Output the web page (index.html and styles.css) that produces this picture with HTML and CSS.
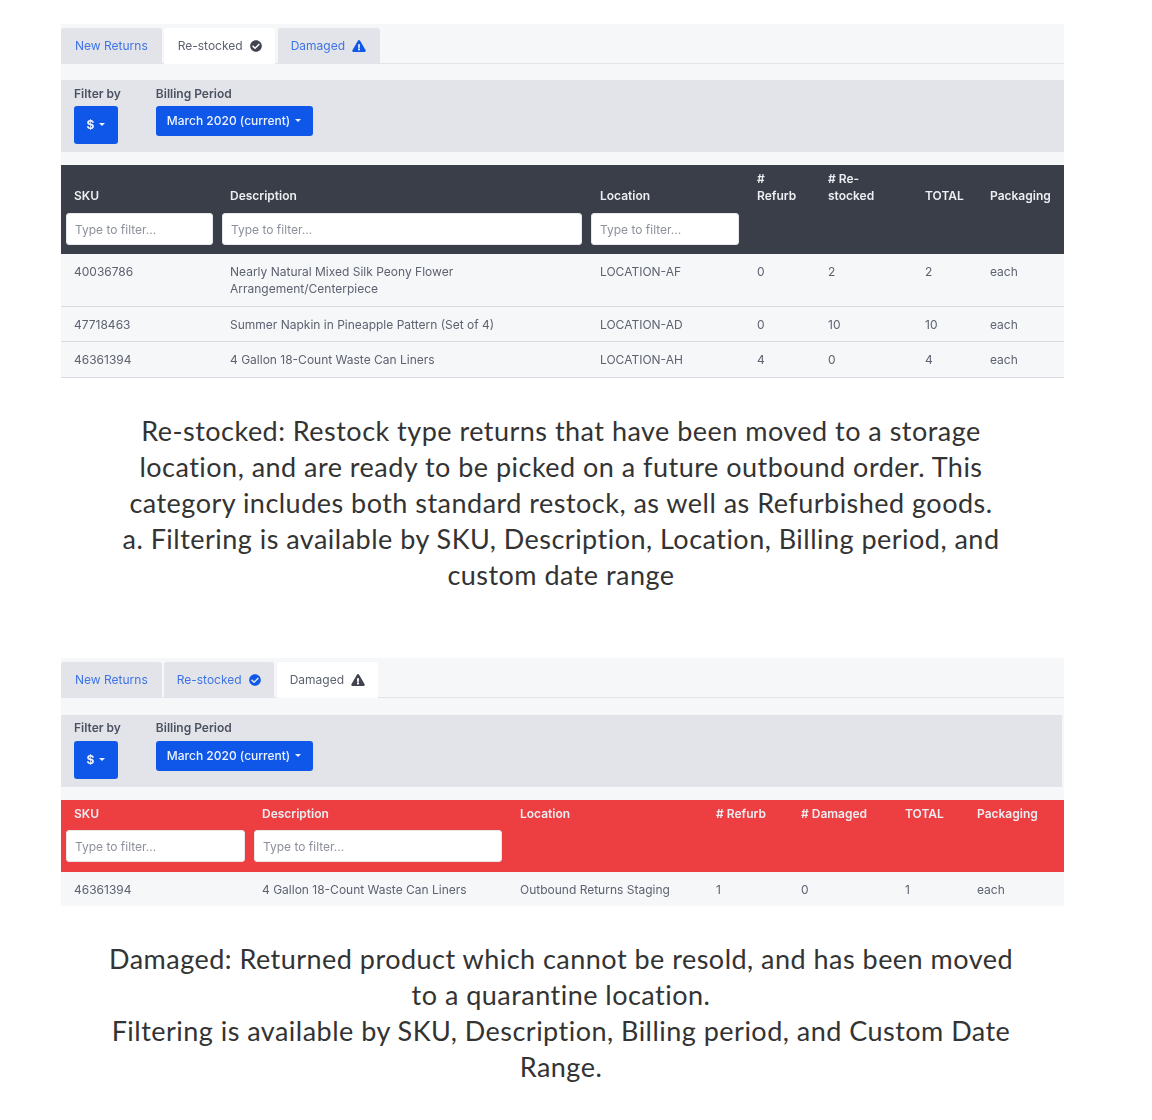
FILE: index.html
```html
<!DOCTYPE html>
<html lang="en">
<head>
<meta charset="utf-8">
<title>Returns</title>
<link rel="stylesheet" href="styles.css">
</head>
<body>
<svg class="defs" width="0" height="0" aria-hidden="true">
  <symbol id="check" viewBox="0 0 512 512"><path d="M504 256c0 136.967-111.033 248-248 248S8 392.967 8 256 119.033 8 256 8s248 111.033 248 248zM227.314 387.314l184-184c6.248-6.248 6.248-16.379 0-22.627l-22.627-22.627c-6.248-6.249-16.379-6.249-22.628 0L216 308.118l-70.059-70.059c-6.248-6.248-16.379-6.248-22.628 0l-22.627 22.627c-6.248 6.248-6.248 16.379 0 22.627l104 104c6.249 6.249 16.379 6.249 22.628.001z"/></symbol>
  <symbol id="warn" viewBox="0 0 576 512"><path d="M569.517 440.013C587.975 472.007 564.806 512 527.94 512H48.054c-36.937 0-59.999-40.055-41.577-71.987L246.423 23.985c18.467-32.009 64.72-31.951 83.154 0l239.94 416.028zM288 354c-25.405 0-46 20.595-46 46s20.595 46 46 46 46-20.595 46-46-20.595-46-46-46zm-43.673-165.346l7.418 136c.347 6.364 5.609 11.346 11.982 11.346h48.546c6.373 0 11.635-4.982 11.982-11.346l7.418-136c.375-6.874-5.098-12.654-11.982-12.654h-63.383c-6.884 0-12.356 5.78-11.981 12.654z"/></symbol>
</svg>
<main class="page">
  <section class="panel">
    <nav class="tabs">
      <a class="tab">New Returns</a>
      <a class="tab active">Re-stocked <svg class="ico"><use href="#check"/></svg></a>
      <a class="tab">Damaged <svg class="ico wide"><use href="#warn"/></svg></a>
    </nav>
    <div class="filters">
      <div class="field"><span class="label">Filter by</span><button class="btn tall">$<i class="caret"></i></button></div>
      <div class="field"><span class="label">Billing Period</span><button class="btn">March 2020 (current)<i class="caret"></i></button></div>
    </div>
    <table class="grid dark">
      <colgroup><col class="a1"><col class="a2"><col class="a3"><col class="a4"><col class="a5"><col class="a6"><col class="a7"></colgroup>
      <thead>
        <tr class="heads"><th>SKU</th><th>Description</th><th>Location</th><th># Refurb</th><th># Re-stocked</th><th>TOTAL</th><th>Packaging</th></tr>
        <tr class="inputs">
          <td><input placeholder="Type to filter..."></td><td><input placeholder="Type to filter..."></td><td><input placeholder="Type to filter..."></td><td></td><td></td><td></td><td></td>
        </tr>
      </thead>
      <tbody>
        <tr><td>40036786</td><td>Nearly Natural Mixed Silk Peony Flower Arrangement/Centerpiece</td><td>LOCATION-AF</td><td>0</td><td>2</td><td>2</td><td>each</td></tr>
        <tr><td>47718463</td><td>Summer Napkin in Pineapple Pattern (Set of 4)</td><td>LOCATION-AD</td><td>0</td><td>10</td><td>10</td><td>each</td></tr>
        <tr><td>46361394</td><td>4 Gallon 18-Count Waste Can Liners</td><td>LOCATION-AH</td><td>4</td><td>0</td><td>4</td><td>each</td></tr>
      </tbody>
    </table>
  </section>
  <p class="copy first">Re-stocked: Restock type returns that have been moved to a storage location, and are ready to be picked on a future outbound order. This category includes both standard restock, as well as Refurbished goods.<br>a. Filtering is available by SKU, Description, Location, Billing period, and custom date range</p>
  <section class="panel second">
    <nav class="tabs">
      <a class="tab">New Returns</a>
      <a class="tab">Re-stocked <svg class="ico"><use href="#check"/></svg></a>
      <a class="tab active">Damaged <svg class="ico wide"><use href="#warn"/></svg></a>
    </nav>
    <div class="filters narrow">
      <div class="field"><span class="label">Filter by</span><button class="btn tall">$<i class="caret"></i></button></div>
      <div class="field"><span class="label">Billing Period</span><button class="btn">March 2020 (current)<i class="caret"></i></button></div>
    </div>
    <table class="grid red">
      <colgroup><col class="b1"><col class="b2"><col class="b3"><col class="b4"><col class="b5"><col class="b6"><col class="b7"></colgroup>
      <thead>
        <tr class="heads"><th>SKU</th><th>Description</th><th>Location</th><th># Refurb</th><th># Damaged</th><th>TOTAL</th><th>Packaging</th></tr>
        <tr class="inputs">
          <td><input placeholder="Type to filter..."></td><td><input placeholder="Type to filter..."></td><td></td><td></td><td></td><td></td><td></td>
        </tr>
      </thead>
      <tbody>
        <tr><td>46361394</td><td>4 Gallon 18-Count Waste Can Liners</td><td>Outbound Returns Staging</td><td>1</td><td>0</td><td>1</td><td>each</td></tr>
      </tbody>
    </table>
  </section>
  <p class="copy">Damaged: Returned product which cannot be resold, and has been moved to a quarantine location.<br>Filtering is available by SKU, Description, Billing period, and Custom Date Range.</p>
</main>
</body>
</html>
```
FILE: styles.css
```css
* { box-sizing: border-box; }
html, body { margin: 0; background: #fff; }
body { font-family: Inter, "Liberation Sans", sans-serif; font-size: 12px; color: #5d6270; }
.defs { position: absolute; }
.page { width: 1003px; margin-left: 61px; padding-top: 24px; }
.panel { background: #f6f7f9; padding-top: 4px; filter: blur(.35px); }
.tabs { display: flex; gap: 2px; height: 36px; border-bottom: 1px solid #e2e4e9; }
.tab { display: flex; align-items: center; gap: 7px; height: 35px; padding: 0 14px; background: #e2e4e9; color: #3f74e6; border-radius: 3px 3px 0 0; line-height: 1; white-space: nowrap; }
.tab:nth-child(2) { padding-right: 13px; }
.tab:nth-child(3) { margin-left: 1px; padding-left: 13px; }
.second .tab:nth-child(2) { padding-left: 13px; }
.second .tab:nth-child(3) { padding-right: 13px; }
.tab.active { background: #fff; color: #5d6270; height: 36px; }
.ico { width: 12px; height: 12px; fill: currentColor; }
.ico.wide { width: 14px; }
.tab.active .ico { fill: #40444f; }
.tab:not(.active) .ico { fill: #0f57e8; }
.filters { display: flex; gap: 35px; height: 72px; margin-top: 16px; padding: 6px 13px; background: #e2e4e9; }
.filters.narrow { margin-top: 17px; margin-right: 2px; padding-top: 5px; }
.field { display: flex; flex-direction: column; align-items: flex-start; gap: 5px; }
.narrow .field { gap: 6px; }
.label { font-weight: 600; line-height: 15px; color: #4b5160; }
.btn { display: flex; align-items: center; justify-content: center; height: 30px; padding: 0 12px 1px 11px; border: 0; border-radius: 3px; background: #0f57e8; color: #eef3fe; font: 500 12px Inter, "Liberation Sans", sans-serif; }
.btn.tall { width: 44px; height: 38px; padding: 0 0 1px; font-weight: 700; }
.caret { width: 0; height: 0; margin-left: 5px; border: 3px solid transparent; border-top-color: currentColor; border-bottom: 0; }
.grid { width: 100%; margin-top: 13px; border-collapse: collapse; table-layout: fixed; }
.grid th { padding: 5px 13px 9px; text-align: left; vertical-align: bottom; font-weight: 600; font-size: 12px; line-height: 17px; color: #eceef2; }
.red .heads th { padding-bottom: 8px; }
.dark thead { background: #3a3e48; }
.red thead { background: #ed3e42; }
.inputs td { vertical-align: top; padding: 0 4px 9px 5px; }
.red .inputs td { padding-bottom: 10px; }
.red .inputs td:nth-child(2), .dark .inputs td:nth-child(2) { padding-right: 5px; }
.dark .inputs td:nth-child(3) { padding-left: 4px; }
.inputs input { display: block; width: 100%; height: 32px; padding: 0 8px; border: 1px solid #e6e8ec; border-radius: 3px; background: #fff; font: 12px Inter, "Liberation Sans", sans-serif; }
.inputs input::placeholder { color: #8d919b; opacity: 1; }
.inputs td:nth-child(3) input { width: 148px; }
tbody td { padding: 9px 13px 8px; vertical-align: top; line-height: 17px; border-bottom: 1px solid #d9dbe1; }
.dark tbody tr:first-child td, .dark tbody tr:last-child td { padding-bottom: 9px; }
.red tbody td { border-bottom: 0; }
.a1 { width: 156px; } .a2 { width: 370px; } .a3 { width: 157px; } .a4 { width: 71px; } .a5 { width: 97px; } .a6 { width: 65px; } .a7 { width: 87px; }
.b1 { width: 188px; } .b2 { width: 258px; } .b3 { width: 196px; } .b4 { width: 85px; } .b5 { width: 104px; } .b6 { width: 72px; } .b7 { width: 100px; }
.copy { width: 920px; margin: 0 0 0 40px; padding: 35px 0 65px; text-align: center; font-family: Lato, sans-serif; font-size: 27px; letter-spacing: .48px; font-variant-ligatures: none; line-height: 36px; color: #333; }
.copy:last-child { padding-bottom: 0; }
```
